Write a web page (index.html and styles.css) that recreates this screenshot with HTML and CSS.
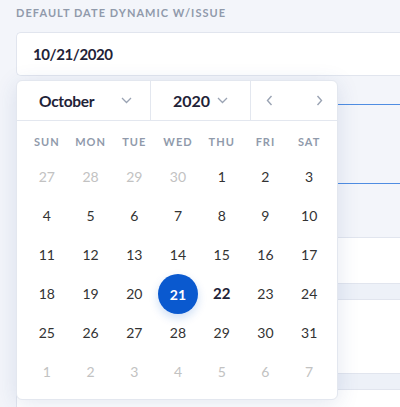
FILE: index.html
```html
<!DOCTYPE html>
<html lang="en">
<head>
    <meta charset="UTF-8">
    <meta name="viewport" content="width=device-width, initial-scale=1.0">
    <title>Date Picker</title>
    <link rel="stylesheet" href="styles.css">
</head>
<body>
    <div class="page">
        <div class="field">
            <label class="field-label">Default Date Dynamic w/Issue</label>
            <div class="date-input">10/21/2020</div>

            <div class="calendar">
                <div class="cal-header">
                    <div class="cal-select month">
                        <span>October</span>
                        <svg class="caret" width="11" height="7" viewBox="0 0 11 7"><path d="M1 1l4.5 4.5L10 1" fill="none" stroke="#9aa3b3" stroke-width="1.3"/></svg>
                    </div>
                    <div class="cal-select year">
                        <span>2020</span>
                        <svg class="caret" width="11" height="7" viewBox="0 0 11 7"><path d="M1 1l4.5 4.5L10 1" fill="none" stroke="#9aa3b3" stroke-width="1.3"/></svg>
                    </div>
                    <div class="cal-nav">
                        <svg width="7" height="11" viewBox="0 0 7 11"><path d="M5.5 1L1.5 5.5l4 4.5" fill="none" stroke="#9aa3b3" stroke-width="1.4"/></svg>
                        <svg width="7" height="11" viewBox="0 0 7 11"><path d="M1.5 1l4 4.5-4 4.5" fill="none" stroke="#9aa3b3" stroke-width="1.4"/></svg>
                    </div>
                </div>

                <div class="cal-body">
                    <div class="weekdays">
                        <span>Sun</span><span>Mon</span><span>Tue</span><span>Wed</span><span>Thu</span><span>Fri</span><span>Sat</span>
                    </div>
                    <div class="days">
                        <span class="day other">27</span><span class="day other">28</span><span class="day other">29</span><span class="day other">30</span><span class="day">1</span><span class="day">2</span><span class="day">3</span>
                        <span class="day">4</span><span class="day">5</span><span class="day">6</span><span class="day">7</span><span class="day">8</span><span class="day">9</span><span class="day">10</span>
                        <span class="day">11</span><span class="day">12</span><span class="day">13</span><span class="day">14</span><span class="day">15</span><span class="day">16</span><span class="day">17</span>
                        <span class="day">18</span><span class="day">19</span><span class="day">20</span><span class="day selected">21</span><span class="day today">22</span><span class="day">23</span><span class="day">24</span>
                        <span class="day">25</span><span class="day">26</span><span class="day">27</span><span class="day">28</span><span class="day">29</span><span class="day">30</span><span class="day">31</span>
                        <span class="day other">1</span><span class="day other">2</span><span class="day other">3</span><span class="day other">4</span><span class="day other">5</span><span class="day other">6</span><span class="day other">7</span>
                    </div>
                </div>
            </div>
        </div>

        <div class="slider-track"></div>
        <div class="below">
            <div class="box short"></div>
            <div class="band"></div>
            <div class="box tall"></div>
            <div class="band"></div>
            <div class="box"></div>
        </div>
    </div>
</body>
</html>
```

FILE: styles.css
```css
* {
    margin: 0;
    padding: 0;
    box-sizing: border-box;
}

body {
    font-family: Lato, 'Open Sans', sans-serif;
    background: #f3f5fa;
    color: #333;
    overflow: hidden;
}

.page {
    padding: 0 0 0 16px;
}

.field {
    position: relative;
    padding-top: 6px;
}

.field-label {
    display: block;
    font-size: 11px;
    font-weight: 700;
    letter-spacing: 1.05px;
    text-transform: uppercase;
    color: #909aab;
    height: 14px;
    line-height: 14px;
}

.date-input {
    margin-top: 12px;
    height: 44px;
    background: white;
    border: 1px solid #e1e5ee;
    border-right: none;
    border-radius: 5px 0 0 5px;
    padding: 0 16px;
    line-height: 42px;
    font-size: 15px;
    font-weight: 700;
    letter-spacing: -0.4px;
    color: #1f2338;
}

.calendar {
    position: absolute;
    top: 80px;
    left: 0;
    width: 322px;
    background: white;
    border: 1px solid #e3e7ef;
    border-radius: 6px;
    box-shadow: 0 4px 22px rgba(40, 70, 140, 0.13);
    z-index: 2;
}

.cal-header {
    display: flex;
    height: 40px;
    border-bottom: 1px solid #e3e7ef;
}

.cal-select {
    display: flex;
    align-items: center;
    justify-content: space-between;
    border-right: 1px solid #e3e7ef;
    font-size: 16px;
    font-weight: 700;
    color: #1f2338;
}

.cal-select.month {
    width: 134px;
    padding: 0 18px 0 22px;
}

.cal-select.month span {
    font-size: 15.5px;
    letter-spacing: -0.3px;
}

.cal-select.year {
    width: 100px;
    padding: 0 22px 0 22px;
}

.cal-nav {
    flex: 1;
    display: flex;
    align-items: center;
    justify-content: space-between;
    padding: 0 14px 0 15px;
}

.cal-body {
    padding: 14px 6px 8px 8px;
}

.weekdays {
    display: grid;
    grid-template-columns: repeat(7, 1fr);
    font-size: 11px;
    font-weight: 700;
    letter-spacing: 1px;
    text-transform: uppercase;
    color: #909aab;
    text-align: center;
    line-height: 14px;
}

.days {
    display: grid;
    grid-template-columns: repeat(7, 1fr);
    grid-auto-rows: 39px;
    margin-top: 8px;
}

.day {
    display: flex;
    align-items: center;
    justify-content: center;
    font-size: 14px;
    color: #333;
}

.day.other {
    color: #c2c2c2;
}

.day.today {
    font-weight: 700;
    color: #1f2338;
    font-size: 15px;
    padding-bottom: 2px;
}

.day.selected {
    justify-self: center;
    width: 40px;
    height: 40px;
    border-radius: 50%;
    background: #0a59cf;
    color: white;
    font-weight: 700;
    box-shadow: 0 4px 10px rgba(10, 89, 207, 0.2);
}

.slider-track {
    margin-top: 28px;
    height: 80px;
    border-top: 1px solid #4f8de2;
    border-bottom: 1px solid #4f8de2;
}

.below {
    margin-top: 53px;
    border-top: 1px solid #e1e5ee;
}

.box {
    background: white;
    height: 45px;
}

.box.tall {
    height: 73px;
}

.band {
    height: 17px;
    background: #edf1f8;
    border-top: 1px solid #e1e5ee;
    border-bottom: 1px solid #e1e5ee;
}

.band + .box {
    border-left: 1px solid #e1e5ee;
}
```
